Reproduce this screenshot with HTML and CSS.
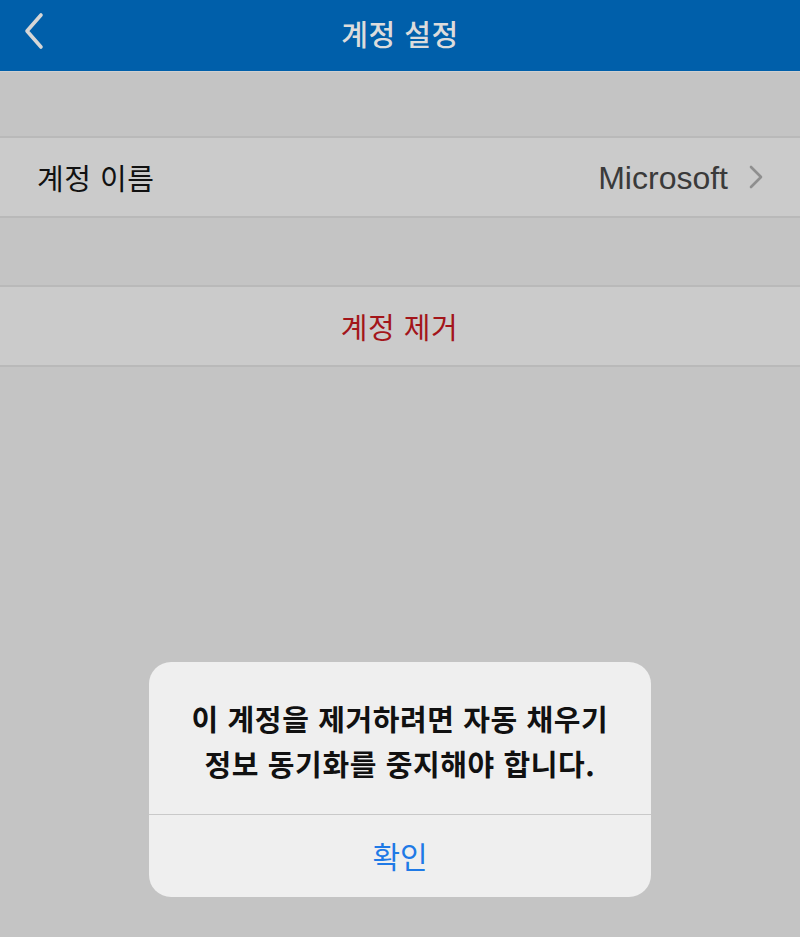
FILE: index.html
```html
<!DOCTYPE html>
<html lang="ko">
<head>
<meta charset="utf-8">
<title>계정 설정</title>
<link rel="stylesheet" href="styles.css">
</head>
<body>
<div class="screen">
  <header class="navbar">
    <button class="back" aria-label="뒤로">
      <svg width="24" height="38" viewBox="0 0 24 38"><path d="M19 3 L5 19 L19 35" fill="none" stroke="#d6d6d6" stroke-width="3.6" stroke-linecap="round" stroke-linejoin="round"/></svg>
    </button>
    <h1 class="title">계정 설정</h1>
  </header>

  <div class="spacer first"></div>
  <div class="row">
    <span class="label">계정 이름</span>
    <span class="value">Microsoft</span>
    <svg class="chev" width="16" height="24" viewBox="0 0 16 24"><path d="M3 2 L13 12 L3 22" fill="none" stroke="#8f8f8f" stroke-width="2.6" stroke-linecap="round" stroke-linejoin="round"/></svg>
  </div>
  <div class="spacer second"></div>
  <div class="row danger">계정 제거</div>

  <div class="alert">
    <p class="alert-msg">이 계정을 제거하려면 자동 채우기<br>정보 동기화를 중지해야 합니다.</p>
    <button class="alert-btn">확인</button>
  </div>
</div>
</body>
</html>
```

FILE: styles.css
```css
html, body {
  margin: 0;
  padding: 0;
}

body {
  font-family: "Noto Sans CJK KR", "Noto Sans", sans-serif;
  background: #c4c4c4;
}

.screen {
  position: relative;
  width: 800px;
  height: 937px;
  overflow: hidden;
  background: #c4c4c4;
}

.navbar {
  position: relative;
  height: 72px;
  background: #005faa;
  border-bottom: 1px solid #d0d0d0;
  box-sizing: border-box;
  display: flex;
  align-items: center;
  justify-content: center;
}

.back {
  position: absolute;
  left: 22px;
  top: 12px;
  padding: 0;
  border: 0;
  background: none;
  display: flex;
}

.title {
  margin: 0 0 6px;
  font-size: 29px;
  font-weight: 500;
  color: #dcdcdc;
  letter-spacing: 0.5px;
}

.spacer.first {
  height: 64px;
}

.spacer.second {
  height: 67px;
}

.row {
  height: 82px;
  box-sizing: border-box;
  background: #cbcbcb;
  border-top: 2px solid #b9b9b9;
  border-bottom: 2px solid #b9b9b9;
  display: flex;
  align-items: center;
  padding: 0 38px 0 37px;
  font-size: 29px;
  color: #111;
}

.label {
  flex: 1;
  letter-spacing: 0.5px;
}

.value {
  font-family: "Liberation Sans", Arial, sans-serif;
  color: #3a3a3a;
  font-size: 32px;
  margin-right: 20px;
  margin-top: 2px;
}

.chev {
  margin-right: -2px;
}

.row.danger {
  justify-content: center;
  color: #a3151a;
  letter-spacing: 0.5px;
}

.alert {
  position: absolute;
  left: 149px;
  top: 662px;
  width: 502px;
  height: 235px;
  background: #efefef;
  border-radius: 22px;
  display: flex;
  flex-direction: column;
  overflow: hidden;
}

.alert-msg {
  margin: 0;
  height: 153px;
  box-sizing: border-box;
  padding-top: 34px;
  border-bottom: 1px solid #c9c9c9;
  text-align: center;
  font-size: 29px;
  font-weight: 700;
  line-height: 45px;
  letter-spacing: 0.6px;
  color: #111;
}

.alert-btn {
  flex: 1;
  border: 0;
  background: none;
  font-family: inherit;
  font-size: 30px;
  color: #1f7ae6;
  padding: 0 0 2px;
}
```
